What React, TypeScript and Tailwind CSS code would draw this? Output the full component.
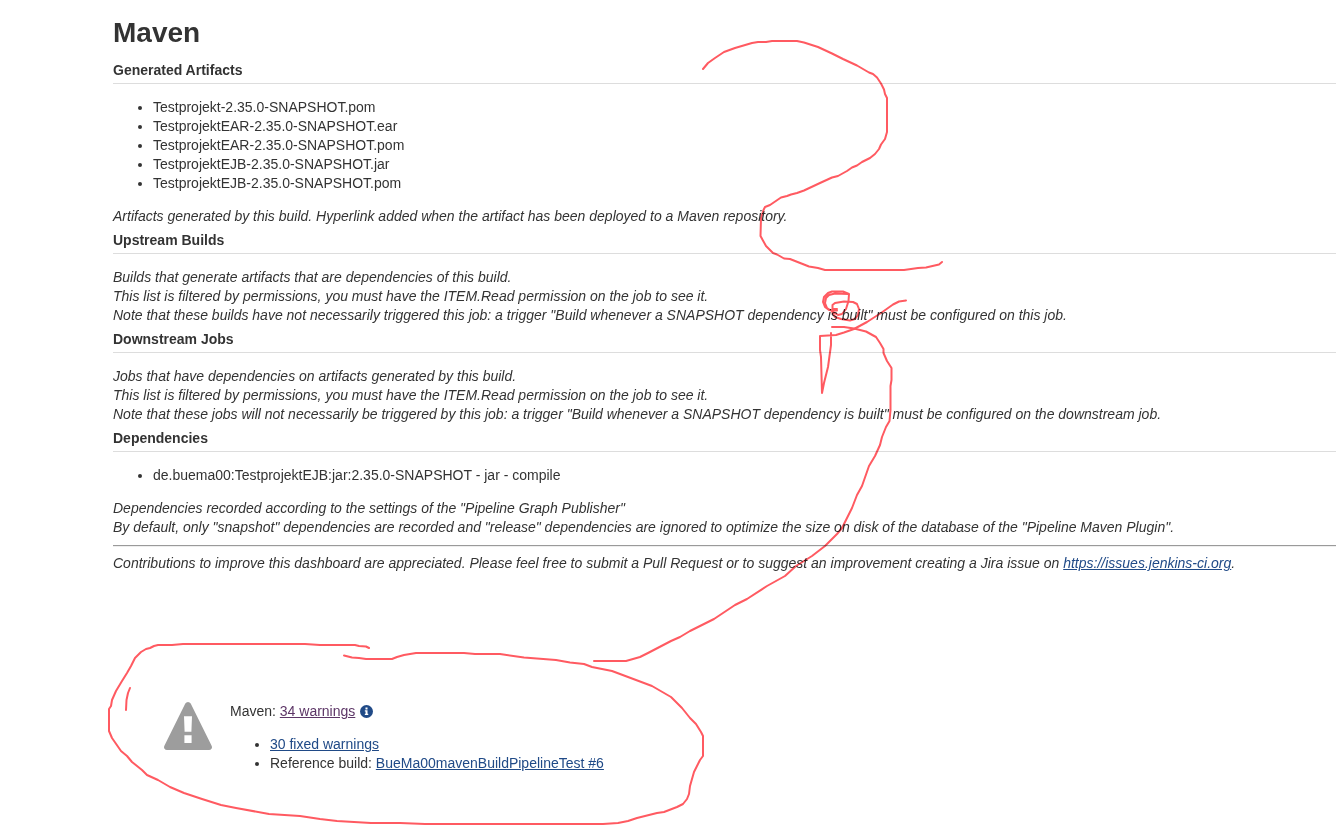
import type { ReactNode } from "react";

const artifacts = [
  "Testprojekt-2.35.0-SNAPSHOT.pom",
  "TestprojektEAR-2.35.0-SNAPSHOT.ear",
  "TestprojektEAR-2.35.0-SNAPSHOT.pom",
  "TestprojektEJB-2.35.0-SNAPSHOT.jar",
  "TestprojektEJB-2.35.0-SNAPSHOT.pom",
];

// Freehand pen strokes laid over the report.
const strokes = [
  // curve beside the artifacts
  "M703 69L708 63L715 58L724 52L735 48L752 43L758 42L766 42L772 41L797 41L804 42.500L818 47L832 53.500L843 59L857 65.500L869 72.500L873 74L877 77.500L881 83.500L884 89.500L885 94L887 98L887 132L885 139L881 144.500L879 149L875 154L870 158L862 162L857 165.500L852 167.500L847 171L838 176L832 177.500L820 183L804 190.500L797 193L791 194.500L787 196L781 197.500L770 205L765 207L763.500 210L761 218L760.500 236L766 246L773 253L777 254.500L784 258.500L790 259L809 266.500L818 268L825 270L904 270L918 268L926 267.500L939 264.500L942 262",
  // scribbled loops
  "M837 310.500L829 310L825 307L823 302L824 297L828 293L832 291.500L843 291.500L849 294L848.500 301L846 309L842 314L838 315L833 312L827 308L825 303L826 298L829 295L835 293.500L848 294",
  "M837 309L832.500 309L832.500 305L835 303L844 301.500L853 302L857 304L859 309L858 315L855 319L850 320.500L841 319L835 317L832.500 313L832.500 308",
  // arrow head
  "M906 300.500L899 301.500L893 304.500L881 313L867 322L854 329L844 332.500L836 335L820 336L820 350L821 357L822 393L824 383L828 367L831 345L831 333",
  // arrow tail down to the warnings
  "M832 327L844 327L854 328.500L866 331.500L876 337L880 343L883.500 349L883.500 353L887 361L891.500 368L891.500 380L890.500 386L890.500 410L889.500 421L886 427L882 437L880 445L875 456L869 466L862 486L857 495L852 508L842 528L837 534L825 546L812 556L796 566L785 576L767 586L747 599L735 605L714 619L690 631L680 637L671 641L648 653L640 657L626 661L594 661",
  // ring round the warnings
  "M369 648L366 646.500L359 646L355 645L320 645L305 644L183 644L172 645L158 645L154 646L150 648L146 649L141 652L135 658L131 666L127 673L122 681L116 691L112 700L111 706L109 709L109 731L112 738L121 751L127 756L132 762L142 770L147 775L158 780L170 787L184 793L202 799L221 805L236 808L269 814L300 816L320 819L337 821L371 823L400 823L425 824L603 824L618 823L628 821L637 818L657 813L664 812L677 807L683 804L687 799L689 794L690 786L694 772L700 760L703 756L703 736L701 732L696 724L690 718L682 708L671 697L652 686L636 680L612 671L597 668L592 667L584 664L570 662.500L556 660L524 657.500L500 654L475 654L464 653L416 653L404 655L397 657L392 659L366 659L359 658L352 657.500L344 655.500",
  "M130 688L128 693L126.500 700L126 710",
];

function Heading({ children }: { children: ReactNode }) {
  return (
    <h2 className="mb-3.5 border-b border-[#dddddd] pt-[5px] pb-[3px] font-bold">
      {children}
    </h2>
  );
}

const linkStyle = "text-[#204a87] underline";

export default function App() {
  return (
    <div className="relative overflow-hidden bg-white font-['Liberation_Sans',Arial,sans-serif] text-sm/[19px] text-[#333333]">
      <main className="pt-[17px] pb-15 pl-[113px]">
        <h1 className="mb-[7px] text-[28px]/8 font-bold">Maven</h1>

        <section>
          <Heading>Generated Artifacts</Heading>
          <ul className="mb-3.5 list-disc pl-10">
            {artifacts.map((name) => (
              <li key={name}>{name}</li>
            ))}
          </ul>
          <p className="italic">
            Artifacts generated by this build. Hyperlink added when the artifact has been deployed to a Maven repository.
          </p>
        </section>

        <section>
          <Heading>Upstream Builds</Heading>
          <p className="italic">
            Builds that generate artifacts that are dependencies of this build.
            <br />
            This list is filtered by permissions, you must have the ITEM.Read permission on the job to see it.
            <br />
            Note that these builds have not necessarily triggered this job: a trigger "Build whenever a SNAPSHOT dependency is built" must be configured on this job.
          </p>
        </section>

        <section>
          <Heading>Downstream Jobs</Heading>
          <p className="italic">
            Jobs that have dependencies on artifacts generated by this build.
            <br />
            This list is filtered by permissions, you must have the ITEM.Read permission on the job to see it.
            <br />
            Note that these jobs will not necessarily be triggered by this job: a trigger "Build whenever a SNAPSHOT dependency is built" must be configured on the downstream job.
          </p>
        </section>

        <section>
          <Heading>Dependencies</Heading>
          <ul className="mb-3.5 list-disc pl-10">
            <li>de.buema00:TestprojektEJB:jar:2.35.0-SNAPSHOT - jar - compile</li>
          </ul>
          <p className="italic">
            Dependencies recorded according to the settings of the "Pipeline Graph Publisher"
            <br />
            By default, only "snapshot" dependencies are recorded and "release" dependencies are ignored to optimize the size on disk of the database of the "Pipeline Maven Plugin".
          </p>
        </section>

        <hr className="mt-2 mb-[7px] h-0.5 border-t border-b border-t-[#9a9a9a] border-b-[#eeeeee]" />

        <p className="italic">
          Contributions to improve this dashboard are appreciated. Please feel free to submit a Pull Request or to suggest an improvement creating a Jira issue on{" "}
          <a className={linkStyle} href="https://issues.jenkins-ci.org">
            https://issues.jenkins-ci.org
          </a>
          .
        </p>

        <section className="mt-[129px] flex items-start gap-[18px] pl-[51px]">
          <svg className="size-12 shrink-0" viewBox="0 0 48 48" aria-hidden="true">
            <path
              fill="#9d9d9d"
              fillRule="evenodd"
              d="M21.300 1.600Q22.200 0 24 0T26.700 1.600L47.500 43.500Q48.500 45.500 47.500 46.800Q46.700 48 45 48H3Q1.300 48 .500 46.800Q-.500 45.500 .500 43.500ZM20 14.300L20.600 29.700H27.400L28 14.300ZM20.400 33.300V40.900H27.600V33.300Z"
            />
          </svg>
          <div>
            <div className="flex items-center gap-[5px]">
              <span>
                Maven:{" "}
                <a className="text-[#5c3566] underline" href="#warnings">
                  34 warnings
                </a>
              </span>
              <a href="#info" aria-label="Information">
                <svg className="size-[13px]" viewBox="0 0 14 14" aria-hidden="true">
                  <circle cx="7" cy="7" r="7" fill="#204a87" />
                  <path fill="#fff" d="M5.900 2.800h2.200v2.100H5.900zM5.200 5.700h2.900v3.600h.8v1.400H5.200V9.300H6V7h-.8z" />
                </svg>
              </a>
            </div>
            <ul className="mt-3.5 list-disc pl-10">
              <li>
                <a className={linkStyle} href="#fixed">
                  30 fixed warnings
                </a>
              </li>
              <li>
                Reference build:{" "}
                <a className={linkStyle} href="#reference">
                  BueMa00mavenBuildPipelineTest #6
                </a>
              </li>
            </ul>
          </div>
        </section>
      </main>

      <svg
        className="pointer-events-none absolute top-0 left-0 h-[834px] w-[1336px] max-w-none mix-blend-multiply"
        viewBox="0 0 1336 834"
        fill="none"
        stroke="#ff5a61"
        strokeWidth="2"
        strokeLinecap="round"
        strokeLinejoin="round"
        aria-hidden="true"
      >
        {strokes.map((d) => (
          <path key={d} d={d} />
        ))}
      </svg>
    </div>
  );
}
